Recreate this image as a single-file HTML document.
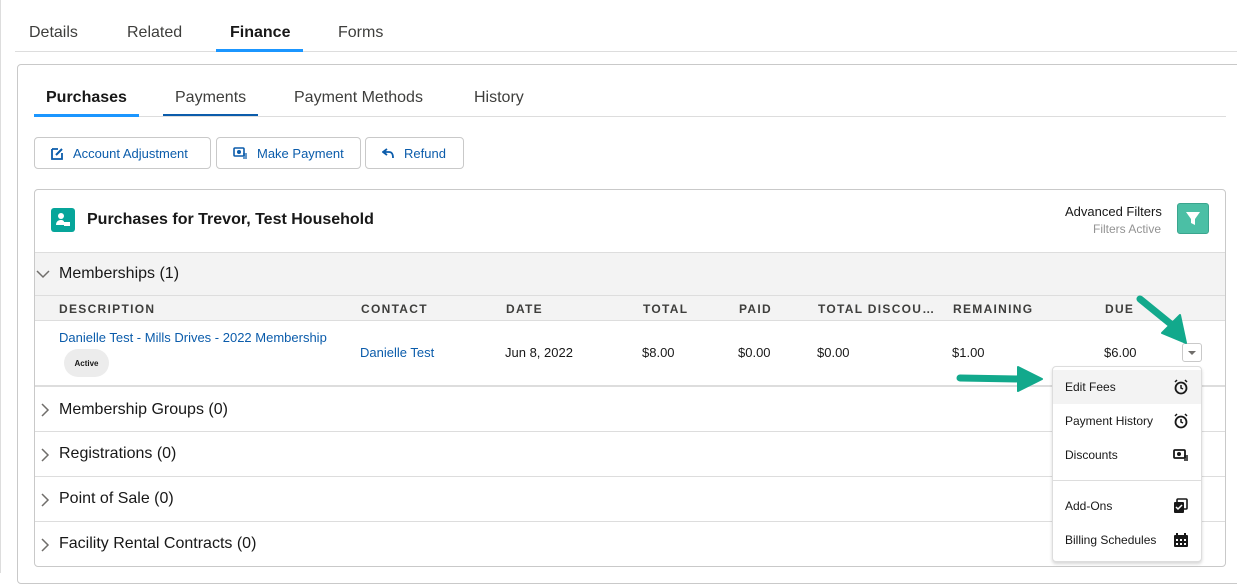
<!DOCTYPE html>
<html><head><style>
*{box-sizing:border-box;margin:0;padding:0}
body{width:1237px;height:573px;overflow:hidden;background:#fff;font-family:"Liberation Sans",sans-serif;color:#181818;position:relative}
.a{position:absolute;white-space:nowrap}
.tab{font-size:16px;color:#3e3e3c}
.btn{position:absolute;top:137px;height:32px;border:1px solid #c9c9c9;border-radius:4px;color:#0b5cab;font-size:13px;display:flex;align-items:center;padding-left:16px;background:#fff}
.btn svg{margin-right:9px}
.th{position:absolute;top:302px;font-size:12px;font-weight:bold;letter-spacing:1.3px;color:#3e3e3c}
.td{position:absolute;top:345px;font-size:13px}
.sec{position:absolute;left:35px;width:1190px;height:45px;border-top:1px solid #ddd;font-size:16px;display:flex;align-items:center;padding-left:24px}
.chev{position:absolute;left:5px;top:16px}
.mi{position:absolute;left:1065px;font-size:12px;color:#181818}
.ic{position:absolute;left:1173px}
</style></head><body>
<div class="a" style="left:0;top:0;width:1px;height:573px;background:#ddd"></div>
<div class="a tab" style="left:29px;top:24px">Details</div>
<div class="a tab" style="left:127px;top:24px">Related</div>
<div class="a tab" style="left:230px;top:24px;font-weight:bold;color:#181818">Finance</div>
<div class="a tab" style="left:338px;top:24px">Forms</div>
<div class="a" style="left:15px;top:51px;width:1222px;height:1px;background:#ddd"></div>
<div class="a" style="left:216px;top:49px;width:87px;height:3px;background:#1b96ff"></div>
<div class="a" style="left:17px;top:64px;width:1230px;height:520px;border:1px solid #c9c9c9;border-radius:4px"></div>
<div class="a tab" style="left:46px;top:89px;font-weight:bold;color:#181818">Purchases</div>
<div class="a tab" style="left:175px;top:89px">Payments</div>
<div class="a tab" style="left:294px;top:89px">Payment Methods</div>
<div class="a tab" style="left:474px;top:89px">History</div>
<div class="a" style="left:34px;top:116px;width:1192px;height:1px;background:#ddd"></div>
<div class="a" style="left:34px;top:114px;width:105px;height:3px;background:#1b96ff"></div>
<div class="a" style="left:163px;top:114px;width:95px;height:2px;background:#0b5cab"></div>
<div class="btn" style="left:34px;width:177px"><svg width="13" height="13" viewBox="0 0 13 13"><path d="M1 2h6M1 2v10h10V6" stroke="#0b5cab" stroke-width="1.8" fill="none"/><path d="M5 8l6-6" stroke="#0b5cab" stroke-width="2"/></svg>Account Adjustment</div>
<div class="btn" style="left:216px;width:145px"><svg width="15" height="12" viewBox="0 0 15 12"><rect x="1" y="1" width="10" height="8" rx="1" stroke="#0b5cab" stroke-width="1.6" fill="none"/><circle cx="6" cy="5" r="2" fill="#0b5cab"/><path d="M10 7h4M10 9h4M10 11h4" stroke="#0b5cab" stroke-width="1.3"/></svg>Make Payment</div>
<div class="btn" style="left:365px;width:99px"><svg width="13" height="12" viewBox="0 0 13 12"><path d="M5 2L1 5l4 3M1 5h6c3 0 4 2 4 6" stroke="#0b5cab" stroke-width="1.8" fill="none"/></svg>Refund</div>
<div class="a" style="left:34px;top:189px;width:1192px;height:378px;border:1px solid #c9c9c9;border-radius:4px"></div>
<div class="a" style="left:51px;top:208px;width:24px;height:24px;background:#06a59a;border-radius:3px"><svg width="24" height="24" viewBox="0 0 24 24"><circle cx="10" cy="8" r="3" fill="#fff"/><path d="M5 17c0-4 3-5 5-5s3 1 3 2v3z" fill="#fff"/><rect x="13" y="14" width="6" height="4" fill="#fff"/></svg></div>
<div class="a" style="left:87px;top:211px;font-size:16px;font-weight:bold">Purchases for Trevor, Test Household</div>
<div class="a" style="left:1065px;top:204px;font-size:13px">Advanced Filters</div>
<div class="a" style="left:1093px;top:222px;font-size:12px;color:#939393">Filters Active</div>
<div class="a" style="left:1177px;top:203px;width:32px;height:31px;background:#4bbfa5;border-radius:3px;border:1px solid #3aa58e"><svg width="30" height="29" viewBox="0 0 30 29"><path d="M8 8h14l-5 7v6l-4-2v-4z" fill="#fff"/></svg></div>
<div class="a" style="left:35px;top:252px;width:1190px;height:69px;background:#f3f3f3;border-top:1px solid #ddd"></div>
<div class="a" style="left:35px;top:295px;width:1190px;height:1px;background:#ddd"></div>
<div class="a" style="left:35px;top:320px;width:1190px;height:1px;background:#ddd"></div>
<svg class="a" style="left:36px;top:269px" width="14" height="10"><path d="M1 2l6 6 6-6" stroke="#706e6b" stroke-width="1.5" fill="none"/></svg>
<div class="a" style="left:59px;top:265px;font-size:16px">Memberships (1)</div>
<div class="th" style="left:59px">DESCRIPTION</div>
<div class="th" style="left:361px">CONTACT</div>
<div class="th" style="left:506px">DATE</div>
<div class="th" style="left:643px">TOTAL</div>
<div class="th" style="left:739px">PAID</div>
<div class="th" style="left:818px">TOTAL DISCOU…</div>
<div class="th" style="left:953px">REMAINING</div>
<div class="th" style="left:1105px">DUE</div>
<div class="a" style="left:59px;top:330px;font-size:13px;color:#0b5cab">Danielle Test - Mills Drives - 2022 Membership</div>
<div class="a" style="left:64px;top:349px;width:45px;height:28px;border-radius:14px;background:#ececec;font-size:8px;font-weight:bold;display:flex;align-items:center;justify-content:center">Active</div>
<div class="td" style="left:360px;color:#0b5cab">Danielle Test</div>
<div class="td" style="left:505px">Jun 8, 2022</div>
<div class="td" style="left:642px">$8.00</div>
<div class="td" style="left:738px">$0.00</div>
<div class="td" style="left:817px">$0.00</div>
<div class="td" style="left:952px">$1.00</div>
<div class="td" style="left:1104px">$6.00</div>
<div class="a" style="left:1182px;top:343px;width:20px;height:19px;border:1px solid #c9c9c9;border-radius:3px;background:#fff"><svg width="18" height="17"><path d="M5 7h8l-4 4z" fill="#706e6b"/></svg></div>
<div class="a" style="left:35px;top:385px;width:1190px;height:2px;background:#ddd"></div>
<div class="sec" style="top:387px;border-top:none"><svg class="chev" width="10" height="14"><path d="M2 1l6 6-6 6" stroke="#706e6b" stroke-width="1.5" fill="none"/></svg>Membership Groups (0)</div>
<div class="sec" style="top:431px"><svg class="chev" width="10" height="14"><path d="M2 1l6 6-6 6" stroke="#706e6b" stroke-width="1.5" fill="none"/></svg>Registrations (0)</div>
<div class="sec" style="top:476px"><svg class="chev" width="10" height="14"><path d="M2 1l6 6-6 6" stroke="#706e6b" stroke-width="1.5" fill="none"/></svg>Point of Sale (0)</div>
<div class="sec" style="top:521px"><svg class="chev" width="10" height="14"><path d="M2 1l6 6-6 6" stroke="#706e6b" stroke-width="1.5" fill="none"/></svg>Facility Rental Contracts (0)</div>
<div class="a" style="left:1052px;top:366px;width:150px;height:196px;background:#fff;border:1px solid #ddd;border-radius:4px;box-shadow:0 2px 3px rgba(0,0,0,.16)"></div>
<div class="a" style="left:1053px;top:370px;width:148px;height:34px;background:#f3f3f3"></div>
<div class="a" style="left:1053px;top:480px;width:148px;height:1px;background:#ddd"></div>
<div class="mi" style="top:380px">Edit Fees</div>
<div class="mi" style="top:414px">Payment History</div>
<div class="mi" style="top:448px">Discounts</div>
<div class="mi" style="top:499px">Add-Ons</div>
<div class="mi" style="top:533px">Billing Schedules</div>
<svg class="ic" style="top:379px" width="16" height="16"><circle cx="8" cy="9" r="5.5" stroke="#181818" stroke-width="1.8" fill="none"/><path d="M8 6v3l2 1M2 3l2-2M14 3l-2-2" stroke="#181818" stroke-width="1.5" fill="none"/></svg>
<svg class="ic" style="top:413px" width="16" height="16"><circle cx="8" cy="9" r="5.5" stroke="#181818" stroke-width="1.8" fill="none"/><path d="M8 6v3l2 1M2 3l2-2M14 3l-2-2" stroke="#181818" stroke-width="1.5" fill="none"/></svg>
<svg class="ic" style="top:447px" width="16" height="16"><rect x="1" y="3" width="11" height="8" rx="1" stroke="#181818" stroke-width="1.8" fill="none"/><circle cx="6" cy="7" r="2" fill="#181818"/><path d="M11 9h4M11 11h4M11 13h4" stroke="#181818" stroke-width="1.4"/></svg>
<svg class="ic" style="top:498px" width="16" height="16"><rect x="4" y="1" width="10" height="10" rx="1" stroke="#181818" stroke-width="1.6" fill="none"/><rect x="1" y="4" width="10" height="11" rx="1" fill="#181818"/><path d="M3 9l2 2 4-4" stroke="#fff" stroke-width="1.5" fill="none"/></svg>
<svg class="ic" style="top:532px" width="16" height="16"><rect x="1" y="3" width="14" height="12" rx="1" fill="#181818"/><path d="M4 1v3M12 1v3" stroke="#181818" stroke-width="2"/><g fill="#fff"><rect x="3" y="7" width="2" height="2"/><rect x="7" y="7" width="2" height="2"/><rect x="11" y="7" width="2" height="2"/><rect x="3" y="11" width="2" height="2"/><rect x="7" y="11" width="2" height="2"/><rect x="11" y="11" width="2" height="2"/></g></svg>
<svg class="a" style="left:940px;top:285px" width="260" height="115" viewBox="0 0 260 115">
<g fill="#12a98c" stroke="#12a98c" stroke-linejoin="round">
<path d="M200 14L232 40" stroke-width="7" stroke-linecap="round"/>
<path d="M222 48L246 58L240 30Z" stroke-width="2"/>
<path d="M20 93L80 94" stroke-width="7" stroke-linecap="round"/>
<path d="M78 82L102 94L78 106Z" stroke-width="2"/>
</g></svg>
</body></html>
